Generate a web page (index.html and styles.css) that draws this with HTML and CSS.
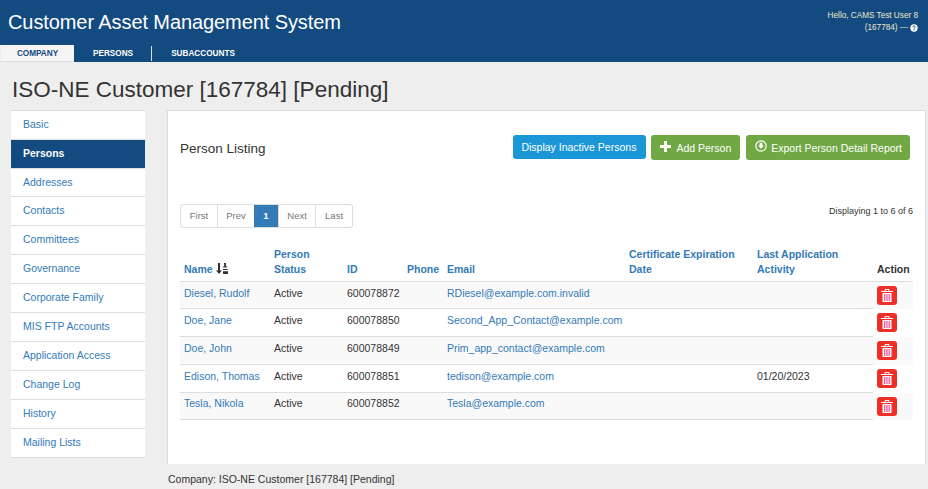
FILE: index.html
```html
<!DOCTYPE html>
<html lang="en">
<head>
<meta charset="utf-8">
<title>Customer Asset Management System</title>
<link rel="stylesheet" href="styles.css">
</head>
<body>
<svg class="defs" aria-hidden="true"><symbol id="trash" viewBox="0 0 12 13"><path d="M4 2V.5h4V2" fill="none" stroke="#fff"/><path d="M0 2h12v1H0z" fill="#fff"/><path d="M1.5 4h9v9h-9z" fill="#fff"/><path d="M3.5 5v7M5.2 5v7M6.9 5v7M8.6 5v7" stroke="#f7468f" stroke-width=".9"/></symbol></svg>
<header class="topbar">
  <div class="topbar-row">
    <div class="brand">Customer Asset Management System</div>
    <div class="user">
      <div>Hello, CAMS Test User 8</div>
      <div class="user-line">(167784) — <svg class="help" viewBox="0 0 10 10"><circle cx="5" cy="5" r="4.6" fill="#fff"/><path d="M3.5 3.9c0-2 3.1-2 3.1-.2 0 1-1.4 1-1.4 2.2" fill="none" stroke="#134a80" stroke-width="1.2"/><rect x="4.5" y="6.6" width="1.3" height="1.3" fill="#134a80"/></svg></div>
    </div>
  </div>
  <nav class="tabs">
    <a class="tab tab-active">COMPANY</a>
    <a class="tab tab-persons">PERSONS</a>
    <a class="tab tab-sub">SUBACCOUNTS</a>
  </nav>
</header>
<h1 class="page-title">ISO-NE Customer [167784] [Pending]</h1>
<div class="content">
  <aside class="sidebar">
    <a class="side-item">Basic</a>
    <a class="side-item side-active">Persons</a>
    <a class="side-item">Addresses</a>
    <a class="side-item">Contacts</a>
    <a class="side-item">Committees</a>
    <a class="side-item">Governance</a>
    <a class="side-item">Corporate Family</a>
    <a class="side-item">MIS FTP Accounts</a>
    <a class="side-item">Application Access</a>
    <a class="side-item">Change Log</a>
    <a class="side-item">History</a>
    <a class="side-item">Mailing Lists</a>
  </aside>
  <main class="panel">
    <div class="panel-head">
      <h2 class="panel-title">Person Listing</h2>
      <div class="actions">
        <a class="btn btn-blue">Display Inactive Persons</a>
        <a class="btn btn-green btn-add"><svg class="plus" viewBox="0 0 11 11"><path d="M4 0h3v4h4v3H7v4H4V7H0V4h4z" fill="#fff"/></svg>Add Person</a>
        <a class="btn btn-green btn-export"><svg class="dl" viewBox="0 0 12 12"><circle cx="6" cy="6" r="5.2" fill="none" stroke="#fff" stroke-width="1.2"/><path d="M4.6 2.8h2.8v2.6h1.5L6 8.8 3.1 5.4h1.5z" fill="#fff"/></svg>Export Person Detail Report</a>
      </div>
    </div>
    <div class="pager-row">
      <div class="pager">
        <a class="page">First</a><a class="page">Prev</a><a class="page page-on">1</a><a class="page">Next</a><a class="page">Last</a>
      </div>
      <div class="count">Displaying 1 to 6 of 6</div>
    </div>
    <table class="grid">
      <colgroup>
        <col class="c-name"><col class="c-status"><col class="c-id"><col class="c-phone"><col class="c-email"><col class="c-cert"><col class="c-last"><col class="c-action">
      </colgroup>
      <thead>
        <tr>
          <th>Name <svg class="sort" viewBox="0 0 12 11"><path d="M2 0h2v7.5h2L3 11 0 7.5h2z" fill="#333"/><path d="M8 0h2v3.6h1v1H7v-1h1.2V1.2H8zM7 6h4.5v1H7zM7 8.2h5V11H7z" fill="#333"/></svg></th>
          <th>Person Status</th>
          <th>ID</th>
          <th>Phone</th>
          <th>Email</th>
          <th>Certificate Expiration Date</th>
          <th>Last Application Activity</th>
          <th class="th-action">Action</th>
        </tr>
      </thead>
      <tbody>
        <tr><td><a>Diesel, Rudolf</a></td><td>Active</td><td>600078872</td><td></td><td><a>RDiesel@example.com.invalid</a></td><td></td><td></td><td class="td-action"><a class="trash"><svg><use href="#trash"/></svg></a></td></tr>
        <tr><td><a>Doe, Jane</a></td><td>Active</td><td>600078850</td><td></td><td><a>Second_App_Contact@example.com</a></td><td></td><td></td><td class="td-action"><a class="trash"><svg><use href="#trash"/></svg></a></td></tr>
        <tr><td><a>Doe, John</a></td><td>Active</td><td>600078849</td><td></td><td><a>Prim_app_contact@example.com</a></td><td></td><td></td><td class="td-action"><a class="trash"><svg><use href="#trash"/></svg></a></td></tr>
        <tr><td><a>Edison, Thomas</a></td><td>Active</td><td>600078851</td><td></td><td><a>tedison@example.com</a></td><td></td><td>01/20/2023</td><td class="td-action"><a class="trash"><svg><use href="#trash"/></svg></a></td></tr>
        <tr><td><a>Tesla, Nikola</a></td><td>Active</td><td>600078852</td><td></td><td><a>Tesla@example.com</a></td><td></td><td></td><td class="td-action"><a class="trash"><svg><use href="#trash"/></svg></a></td></tr>
      </tbody>
    </table>
  </main>
</div>
<footer class="foot">Company: ISO-NE Customer [167784] [Pending]</footer>
</body>
</html>
```
FILE: styles.css
```css
* { box-sizing: border-box; }
html, body { margin: 0; height: 489px; overflow: hidden; }
body { background: #eee; font-family: "Liberation Sans", Arial, sans-serif; font-size: 11px; color: #333; }
a { color: #337ab7; text-decoration: none; }
.defs { display: none; }

.topbar { background: #134a80; height: 62px; display: flex; flex-direction: column; justify-content: space-between; }
.topbar-row { display: flex; justify-content: space-between; padding: 9px 10px 0 8px; }
.brand { color: #fff; font-size: 20px; line-height: 27px; letter-spacing: -0.09px; }
.user { color: #f0e8c8; font-size: 8.2px; line-height: 12px; text-align: right; padding-top: 1px; }
.user-line { display: flex; justify-content: flex-end; align-items: center; gap: 2px; }
.help { width: 8px; height: 8px; }
.tabs { display: flex; height: 17px; align-items: center; }
.tab { color: #fff; font-size: 8.2px; font-weight: bold; line-height: 15px; }
.tab-active { background: #f5f5f5; color: #134a80; width: 74px; height: 17px; line-height: 17px; text-align: center; border-left: 1px solid #eee; border-bottom: 1px solid #ddd; }
.tab-persons { width: 78px; text-align: center; border-right: 1px solid #ddd; padding-left: 1px; }
.tab-sub { width: 102px; text-align: center; }

.page-title { margin: 0; padding: 13px 0 0 12px; font-size: 22.5px; font-weight: normal; line-height: 30px; height: 48px; color: #333; }

.content { display: flex; align-items: flex-start; padding-left: 11px; }
.sidebar { width: 134px; display: flex; flex-direction: column; background: #fff; border-top: 1px solid #ddd; border-bottom: 1px solid #ddd; }
.side-item { height: 29px; padding: 0 12px; line-height: 27px; border-bottom: 1px solid #ddd; color: #337ab7; font-size: 10.5px; }
.side-item:nth-child(3) { height: 28px; }
.side-item:last-child { height: 28px; border-bottom: 0; }
.side-active { background: #134a80; color: #fff; font-weight: bold; }

.panel { margin-left: 22px; width: 759px; height: 354px; background: #fff; border: 1px solid #ddd; border-bottom: 0; padding: 24px 12px 0 12px; }
.panel-head { display: flex; justify-content: space-between; align-items: center; height: 25px; }
.panel-title { margin: 2px 0 0; font-size: 13.5px; font-weight: normal; color: #333; }
.actions { display: flex; margin-right: 3px; }
.btn { color: #fff; font-size: 10.5px; height: 25px; border-radius: 3px; padding: 0 9px; display: flex; align-items: center; }
.btn-blue { background: #1b96d6; height: 24px; padding: 0 10px 0 8px; }
.btn-green { background: #70a844; }
.btn-add { margin-left: 5px; padding-right: 9px; }
.btn-export { margin-left: 6px; padding-right: 8px; }
.plus { width: 11px; height: 11px; margin-right: 5px; position: relative; top: -1px; }
.dl { width: 12px; height: 12px; margin-right: 4px; position: relative; top: -2px; }

.pager-row { display: flex; justify-content: space-between; align-items: flex-start; margin-top: 44px; height: 43px; }
.pager { display: flex; border: 1px solid #ddd; border-radius: 3px; height: 24px; width: 173px; }
.page { flex: 37 0 0; text-align: center; line-height: 21px; font-size: 9.5px; color: #777; border-left: 1px solid #ddd; }
.page:first-child { border-left: 0; }
.page-on { flex: 25 0 0; background: #337ab7; color: #fff; border-left: 0; font-weight: bold; }
.count { font-size: 9px; color: #333; line-height: 12px; margin-top: 1px; }

.grid { border-collapse: collapse; table-layout: fixed; width: 733px; font-size: 10.5px; }
.c-name { width: 90px; } .c-status { width: 73px; } .c-id { width: 60px; } .c-phone { width: 40px; }
.c-email { width: 182px; } .c-cert { width: 128px; } .c-last { width: 120px; } .c-action { width: 40px; }
.grid th { text-align: left; vertical-align: bottom; font-weight: bold; color: #337ab7; padding: 0 4px 4px; line-height: 15px; border-bottom: 1px solid #ddd; font-size: 10.5px; }
.grid .th-action { color: #333; }
.grid td { height: 28px; padding: 0 4px 5px; border-bottom: 1px solid #ddd; color: #333; }
.grid tbody tr:first-child td, .grid tbody tr:last-child td { height: 27px; }
.grid tbody tr:last-child td { padding-bottom: 7px; }
.grid tbody tr:nth-child(odd) td { background: #f9f9f9; }
.sort { width: 12px; height: 11px; vertical-align: -1px; }
.trash { display: flex; align-items: center; justify-content: center; width: 20px; height: 19px; background: #ee2f27; border-radius: 3px; }
.trash svg { width: 12px; height: 13px; }
.grid .td-action, .grid tbody tr:last-child .td-action { padding: 4px 4px 0; vertical-align: top; border-bottom: 0; box-shadow: 0 1px 0 #ddd; position: relative; }

.foot { padding: 9px 0 0 168px; font-size: 10.5px; color: #333; line-height: 12px; }
```
